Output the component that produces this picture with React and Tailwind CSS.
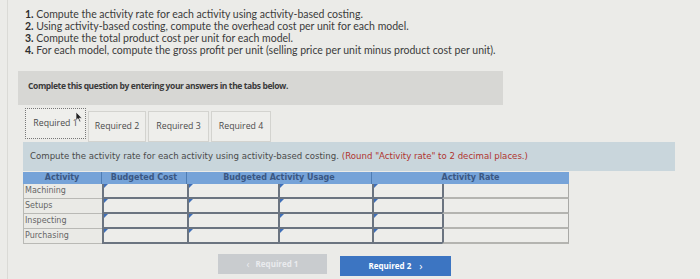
import React from 'react';

const steps = [
  'Compute the activity rate for each activity using activity-based costing.',
  'Using activity-based costing, compute the overhead cost per unit for each model.',
  'Compute the total product cost per unit for each model.',
  'For each model, compute the gross profit per unit (selling price per unit minus product cost per unit).',
];

const tabs = [
  { label: 'Required 1', w: 'w-[61px]' },
  { label: 'Required 2', w: 'w-[58px]' },
  { label: 'Required 3', w: 'w-[61px]' },
  { label: 'Required 4', w: 'w-[60px]' },
];

const activities = ['Machining', 'Setups', 'Inspecting', 'Purchasing'];

const InputCell = ({ w }) => (
  <div className={`relative ${w} h-[15px] bg-[#ededea] border-l-2 border-b-2 border-[#6b7480]`}>
    <span className="absolute left-0 top-0 w-0 h-0 border-t-[4px] border-r-[4px] border-t-[#3f6fb8] border-r-transparent" />
  </div>
);

const Cursor = () => (
  <svg className="absolute right-[2px] top-[2px]" width="8" height="12" viewBox="0 0 8 12">
    <path d="M1 1 L1 9.5 L3 7.6 L4.6 11 L5.8 10.4 L4.3 7.2 L7 7.2 Z" fill="#222" stroke="#f4f4f4" strokeWidth="0.7" />
  </svg>
);

export default function App() {
  return (
    <div className="w-[700px] h-[279px] overflow-hidden bg-[#ebebe8]" style={{ fontFamily: 'Lato, "Open Sans", sans-serif' }}>
      <div className="ml-[7px] h-full border-l border-[#dadad6] pl-[10px]">
        <ol className="pt-[8px] pl-[7px] text-[10.5px] leading-[12px] text-[#3b3b3b]">
          {steps.map((s, i) => (
            <li key={i}>
              <span className="font-bold text-[#2d2d2d]">{i + 1}.</span> {s}
            </li>
          ))}
        </ol>

        <div className="mt-[15px] w-[485px] h-[34px] bg-[#d7d7d4] pl-[10px] pt-[9px] text-[8.5px] font-bold tracking-[-0.4px] text-[#3a3a3a]" style={{ fontFamily: '"Open Sans", sans-serif' }}>
          Complete this question by entering your answers in the tabs below.
        </div>

        <div className="mt-[3px] ml-[7px] flex items-start gap-[2px] text-[8.75px] text-[#4a4a4a] whitespace-nowrap" style={{ fontFamily: '"Open Sans", sans-serif' }}>
          {tabs.map((t, i) => (
            <div
              key={t.label}
              className={`relative ${t.w} flex items-center justify-center ${
                i === 0
                  ? 'h-[31px] border border-dotted border-[#777] bg-[#efefec]'
                  : 'mt-[3px] h-[31px] border border-[#d3d3cf] bg-[#eeeeeb]'
              }`}
            >
              <span>{t.label}</span>
              {i === 0 && <Cursor />}
            </div>
          ))}
        </div>

        <div className="ml-[5px] w-[652px] h-[29px] bg-[#c9d6dc] pl-[7px] flex items-center text-[8.6px] text-[#4a4a4a]" style={{ fontFamily: '"DejaVu Sans", sans-serif' }}>
          Compute the activity rate for each activity using activity-based costing.{' '}
          <span className="ml-[3px] text-[#b0342e]">(Round "Activity rate" to 2 decimal places.)</span>
        </div>

        <div className="ml-[5px] mt-[1px] w-[546px] text-[8px]" style={{ fontFamily: '"DejaVu Sans", sans-serif' }}>
          <div className="flex h-[12px] bg-[#76a3d8] font-bold text-[#3a5783] leading-[12px]">
            <div className="w-[79px] text-center border-r border-[#4f7db4]">Activity</div>
            <div className="w-[85px] text-center border-r border-[#4f7db4]">Budgeted Cost</div>
            <div className="w-[185px] text-center border-r border-[#4f7db4]">Budgeted Activity Usage</div>
            <div className="w-[197px] text-center">Activity Rate</div>
          </div>
          {activities.map((a) => (
            <div key={a} className="flex h-[15px]">
              <div className="w-[79px] h-[15px] border-l border-b border-[#b9b9b5] bg-[#eaeae6] pl-[1px] leading-[14px] text-[#666]">{a}</div>
              <InputCell w="w-[85px]" />
              <InputCell w="w-[91px]" />
              <InputCell w="w-[94px]" />
              <InputCell w="w-[70px]" />
              <div className="w-[127px] h-[15px] bg-[#ededea] border-l-2 border-r border-b-2 border-l-[#6b7480] border-r-[#a9a9a6] border-b-[#b4b4b0]" />
            </div>
          ))}
        </div>

        <div className="mt-[10px] ml-[200px] flex items-start gap-[13px] text-[8px] font-bold" style={{ fontFamily: '"Open Sans", sans-serif' }}>
          <div className="w-[109px] h-[20px] bg-[#c9cccf] text-[#e9ebee] flex items-center justify-center gap-[6px]">
            <span className="text-[10px] font-normal">‹</span> Required 1
          </div>
          <div className="mt-[2px] w-[111px] h-[20px] bg-[#3c75c2] text-white flex items-center justify-center gap-[8px]">
            Required 2 <span className="text-[11px] font-normal">›</span>
          </div>
        </div>
      </div>
    </div>
  );
}
